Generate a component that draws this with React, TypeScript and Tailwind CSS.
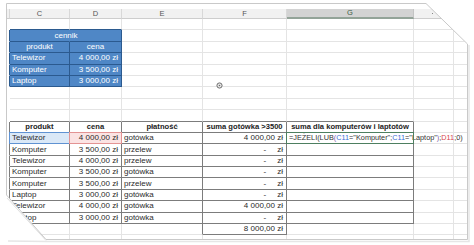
import React from 'react';

type Align = 'left' | 'center' | 'right';
interface CellSpec {
  t?: React.ReactNode;
  a?: Align;
  b?: boolean;
}

const W = [4, 60, 52, 81, 84, 127, 40, 40];
const LETTERS = ['', 'C', 'D', 'E', 'F', 'G', '', ''];
const NROWS = 20;

type Reg = 'cennik' | 'table' | null;

function region(r: number, c: number): Reg {
  if (r >= 2 && r <= 6 && (c === 1 || c === 2)) return 'cennik';
  if (r >= 10 && r <= 18 && c >= 1 && c <= 5) return 'table';
  if (r === 19 && c === 4) return 'table';
  return null;
}

const RIGHT = {
  grid: 'border-r-[#e4e4e4]',
  table: 'border-r-[#7c7c7c]',
  cennik: 'border-r-[#2b5a8f]',
  fill: 'border-r-[#4f87c6]',
  none: 'border-r-transparent',
};
const BOTTOM = {
  grid: 'border-b-[#e4e4e4]',
  table: 'border-b-[#7c7c7c]',
  cennik: 'border-b-[#2b5a8f]',
  none: 'border-b-transparent',
};

function pick(a: Reg, b: Reg): 'grid' | 'table' | 'cennik' {
  if (a === 'cennik' || b === 'cennik') return 'cennik';
  if (a === 'table' || b === 'table') return 'table';
  return 'grid';
}

const Dash = () => (
  <span className="flex justify-end w-full">
    <span>-</span>
    <span className="ml-[11px]">zł</span>
  </span>
);

const Formula = () => (
  <span className="text-[7.3px] text-[#333]">
    {'=JEŻELI(LUB'}
    <span className="text-[#7a5aa8]">(</span>
    <span className="text-[#3c6fd6]">C11</span>
    {'="Komputer";'}
    <span className="text-[#3c6fd6]">C11</span>
    {'="Laptop"'}
    <span className="text-[#7a5aa8]">)</span>
    {';'}
    <span className="text-[#d8434f]">D11</span>
    {';0)'}
  </span>
);

const data: Record<number, Record<number, CellSpec>> = {
  2: { 1: { t: 'cennik', a: 'center' } },
  3: { 1: { t: 'produkt', a: 'center' }, 2: { t: 'cena', a: 'center' } },
  4: { 1: { t: 'Telewizor' }, 2: { t: '4 000,00 zł', a: 'right' } },
  5: { 1: { t: 'Komputer' }, 2: { t: '3 500,00 zł', a: 'right' } },
  6: { 1: { t: 'Laptop' }, 2: { t: '3 000,00 zł', a: 'right' } },
  10: {
    1: { t: 'produkt', a: 'center', b: true },
    2: { t: 'cena', a: 'center', b: true },
    3: { t: 'płatność', a: 'center', b: true },
    4: { t: 'suma gotówka >3500', a: 'center', b: true },
    5: { t: 'suma dla komputerów i laptotów', a: 'center', b: true },
  },
  19: { 4: { t: '8 000,00 zł', a: 'right' } },
};

const rowsData: [string, string, string, boolean][] = [
  ['Telewizor', '4 000,00 zł', 'gotówka', true],
  ['Komputer', '3 500,00 zł', 'przelew', false],
  ['Telewizor', '4 000,00 zł', 'przelew', false],
  ['Komputer', '3 500,00 zł', 'gotówka', false],
  ['Komputer', '3 500,00 zł', 'przelew', false],
  ['Laptop', '3 000,00 zł', 'gotówka', false],
  ['Telewizor', '4 000,00 zł', 'gotówka', true],
  ['Laptop', '3 000,00 zł', 'gotówka', false],
];
rowsData.forEach(([p, c, pl, big], i) => {
  const r = 11 + i;
  data[r] = {
    1: { t: p },
    2: { t: c, a: 'right' },
    3: { t: pl },
    4: big ? { t: '4 000,00 zł', a: 'right' } : { t: <Dash />, a: 'right' },
  };
});
data[11][5] = { t: <Formula /> };

function Cell({ r, c }: { r: number; c: number }) {
  const reg = region(r, c);
  const spec = data[r]?.[c];
  let right: string;
  if (c === 0) {
    const n = region(r, 1);
    right = n ? RIGHT[pick(null, n)] : RIGHT.none;
  } else if (r === 2 && c === 1) {
    right = RIGHT.fill;
  } else {
    right = RIGHT[pick(reg, region(r, c + 1))];
  }
  const bottom = c === 0 ? BOTTOM.none : BOTTOM[pick(reg, region(r + 1, c))];

  let bg = '';
  let color = 'text-[#2b2b2b]';
  if (reg === 'cennik') {
    bg = 'bg-[#4f87c6]';
    color = 'text-white';
  }
  if (r === 11 && c === 1) bg = 'bg-[#dae8f7]';
  if (r === 11 && c === 2) bg = 'bg-[#fbe3e3]';

  const align =
    spec?.a === 'center' ? 'justify-center' : spec?.a === 'right' ? 'justify-end' : 'justify-start';
  const pad = spec?.a === 'right' ? 'pr-[3px]' : spec?.a === 'center' ? '' : 'pl-[2px]';
  const front = (r === 2 && c === 1) || (r === 11 && c === 5) ? 'relative z-10' : 'relative';

  return (
    <div
      style={{ width: W[c] }}
      className={`shrink-0 h-full border-r border-b box-border flex items-center whitespace-nowrap ${right} ${bottom} ${bg} ${color} ${align} ${pad} ${front} ${
        spec?.b ? 'font-bold text-[7.6px] text-[#222]' : ''
      }`}
    >
      {r === 2 && c === 1 ? (
        <span className="absolute left-0 top-0 h-full w-[112px] flex items-center justify-center">cennik</span>
      ) : (
        spec?.t
      )}
      {r === 11 && c === 1 && (
        <span className="absolute left-[-1px] top-[-1px] right-[-1px] bottom-[-1px] border border-[#5f92d2]" />
      )}
      {r === 11 && c === 2 && (
        <span className="absolute left-[-1px] top-[-1px] right-[-1px] bottom-[-1px] border border-[#e39393]" />
      )}
      {r === 11 && c === 5 && (
        <span className="absolute left-[-1px] top-[-1px] w-[128px] bottom-[-1px] border border-[#4d7f60]" />
      )}
    </div>
  );
}

export default function App() {
  const rows = Array.from({ length: NROWS }, (_, i) => i + 1);
  return (
    <div className="relative w-[474px] h-[245px] overflow-hidden bg-white font-['Liberation_Sans',Arial,sans-serif] text-[8px]">
      <div className="w-[474px] h-[245px] bg-white pt-[9px] pl-[6px] [clip-path:polygon(6px_3px,426px_3px,467px_44px,467px_239px,46px_239px,6px_195px)]">
        {/* column header */}
        <div className="flex h-[10px]">
          {W.map((w, c) => (
            <div
              key={c}
              style={{ width: w }}
              className={`shrink-0 h-full box-border flex items-center justify-center text-[7.5px] ${
                c === 5
                  ? 'bg-[#d3d3d3] border-b-2 border-b-[#93a398] border-r border-r-[#c4c4c4] text-[#3d5c47]'
                  : 'bg-[#f1f1f1] border-b border-b-[#cdcdcd] border-r border-r-[#d8d8d8] text-[#555]'
              }`}
            >
              {LETTERS[c]}
              {c === 6 && <span className="ml-[-2px] w-[1.5px] h-[1.5px] bg-[#666] rounded-full" />}
            </div>
          ))}
        </div>
        {rows.map((r) => (
          <div key={r} className="flex h-[11.4px]">
            {W.map((_, c) => (
              <Cell key={c} r={r} c={c} />
            ))}
          </div>
        ))}
      </div>

      {/* cursor */}
      <div className="absolute left-[216px] top-[82px]">
        <svg width="7" height="7" viewBox="0 0 7 7">
          <circle cx="3.5" cy="3.5" r="2.6" fill="#e8e8e8" stroke="#6d6d6d" strokeWidth="1" />
          <circle cx="3.5" cy="3.5" r="0.8" fill="#6d6d6d" />
        </svg>
      </div>

      {/* paper frame */}
      <svg className="absolute inset-0 pointer-events-none" width="474" height="245" viewBox="0 0 474 245">
        <polyline points="8,241 47,241.5 469,241.5 469,45" fill="none" stroke="#e6e6e6" strokeWidth="1.5" />
        <polyline points="7,198 46,240.5" fill="none" stroke="#e2e2e2" strokeWidth="1" />
        <polygon
          points="6.5,3.5 426,3.5 467.5,44 467.5,239.5 46,239.5 6.5,195"
          fill="none"
          stroke="#c9c9c9"
          strokeWidth="1"
        />
      </svg>
    </div>
  );
}
